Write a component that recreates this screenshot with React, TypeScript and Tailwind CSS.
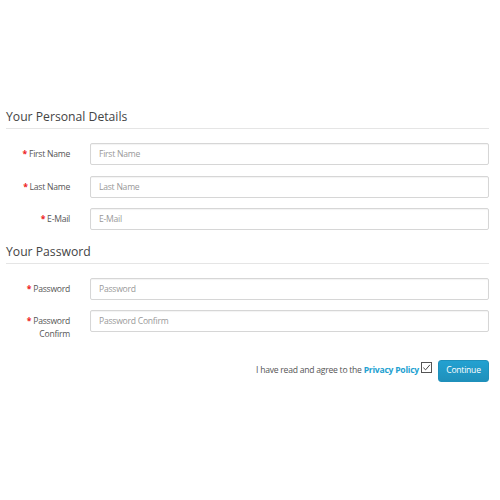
export default function App() {
  const personal = [
    { label: 'First Name', placeholder: 'First Name' },
    { label: 'Last Name', placeholder: 'Last Name' },
    { label: 'E-Mail', placeholder: 'E-Mail' },
  ];

  const Row = ({ label, second, placeholder }: { label: string; second?: string; placeholder: string }) => (
    <div className="flex items-start h-[32.5px]">
      <div className="w-[84px] pr-[20px] text-right text-[8.6px] tracking-[-0.25px] leading-[13px] text-[#555] pt-[5px]">
        <span className="text-[#e22] font-bold">* </span>
        {label}
        {second && (
          <>
            <br />
            {second}
          </>
        )}
      </div>
      <input
        placeholder={placeholder}
        className="flex-1 h-[22px] px-[8px] text-[8.6px] tracking-[-0.25px] border border-[#d6d6d6] rounded-[2px] bg-white placeholder-[#999] text-[#555] outline-none shadow-[inset_0_1px_1px_rgba(0,0,0,0.05)]"
      />
    </div>
  );

  return (
    <div className="w-[500px] h-[500px] bg-white pt-[108px] pl-[6px]" style={{ fontFamily: '"Open Sans", sans-serif' }}>
      <div className="w-[483px]">
        <h2 className="text-[12.2px] leading-[17px] text-[#444] pb-[3px] border-b border-[#e5e5e5] mb-[14px]">Your Personal Details</h2>
        {personal.map((p) => (
          <Row key={p.label} label={p.label} placeholder={p.placeholder} />
        ))}
        <h2 className="text-[12.2px] leading-[17px] text-[#444] pb-[3px] border-b border-[#e5e5e5] mb-[14px] mt-[2px]">Your Password</h2>
        <Row label="Password" placeholder="Password" />
        <Row label="Password" second="Confirm" placeholder="Password Confirm" />
        <div className="flex justify-end items-center mt-[17px] gap-[6px]">
          <div className="flex items-center text-[8.6px] tracking-[-0.25px] text-[#555]">
            <span>I have read and agree to the&nbsp;</span>
            <a className="font-bold text-[#23a1d1]">Privacy Policy</a>
            <span className="ml-[2px] w-[11px] h-[11px] border border-[#555] flex items-center justify-center mb-[6px]">
              <svg viewBox="0 0 10 10" className="w-[9px] h-[9px]">
                <path d="M1.5 5.2 L4 7.6 L8.8 2" fill="none" stroke="#333" strokeWidth="1" />
              </svg>
            </span>
          </div>
          <button className="w-[51px] h-[22px] rounded-[3px] bg-gradient-to-b from-[#23a1d1] to-[#1f90bb] text-white text-[8.6px] tracking-[-0.25px] border border-[#1f90bb]">Continue</button>
        </div>
      </div>
    </div>
  );
}
